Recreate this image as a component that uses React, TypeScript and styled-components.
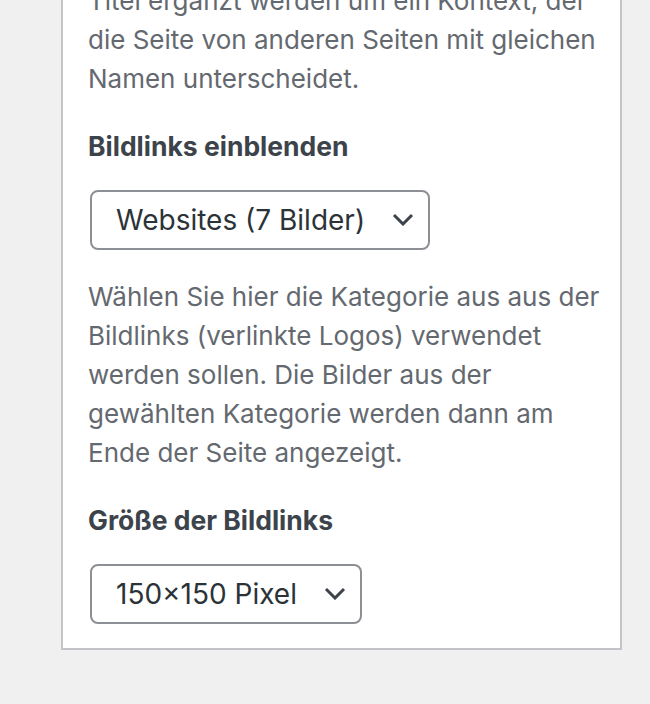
import React from "react";
import styled, { createGlobalStyle } from "styled-components";

const Global = createGlobalStyle`
  html, body { margin: 0; padding: 0; background: #f0f0f1; }
  body { font-family: Inter, "Noto Sans", sans-serif; -webkit-font-smoothing: antialiased; }
  #root { overflow: hidden; height: 704px; }
`;

const Page = styled.div`
  padding-left: 61px;
  width: 561px;
`;

const Panel = styled.section`
  margin-top: -19.5px;
  background: #fff;
  border: 2px solid #c3c4c7;
  border-top: none;
  padding: 0 24px 24px 25px;
`;

const Description = styled.p`
  margin: 0;
  font-size: 26px;
  line-height: 39px;
  color: #646970;
  white-space: nowrap;
`;

const Section = styled.div`
  margin-top: 30px;
  display: flex;
  flex-direction: column;
  align-items: flex-start;
  gap: 26.5px;
`;

const Label = styled.h3`
  margin: 0;
  font-size: 26.5px;
  line-height: 36px;
  font-weight: 700;
  color: #3c434a;
`;

const SelectWrap = styled.div`
  position: relative;
  margin: 0 2px;
  display: inline-flex;
`;

const Select = styled.div`
  box-sizing: border-box;
  height: 60px;
  display: flex;
  align-items: center;
  padding: 0 63px 0 24px;
  border: 2px solid #8c8f94;
  border-radius: 8px;
  background: #fff;
  font-size: 28px;
  color: #2c3338;
  white-space: nowrap;
`;

const Chevron = styled.svg`
  position: absolute;
  right: 16px;
  top: 50%;
  width: 22px;
  height: 13px;
  margin-top: -7px;
`;

function Dropdown({ value }: { value: string }) {
  return (
    <SelectWrap>
      <Select role="combobox">{value}</Select>
      <Chevron viewBox="0 0 22 13" fill="none">
        <path d="M2 2 L11 11 L20 2" stroke="#3c434a" strokeWidth="3" />
      </Chevron>
    </SelectWrap>
  );
}

export default function App() {
  return (
    <>
      <Global />
      <Page>
        <Panel>
          <Description>
            Titel ergänzt werden um ein Kontext, der
            <br />
            die Seite von anderen Seiten mit gleichen
            <br />
            Namen unterscheidet.
          </Description>
          <Section>
            <Label>Bildlinks einblenden</Label>
            <Dropdown value="Websites (7 Bilder)" />
            <Description>
              Wählen Sie hier die Kategorie aus aus der
              <br />
              Bildlinks (verlinkte Logos) verwendet
              <br />
              werden sollen. Die Bilder aus der
              <br />
              gewählten Kategorie werden dann am
              <br />
              Ende der Seite angezeigt.
            </Description>
          </Section>
          <Section>
            <Label>Größe der Bildlinks</Label>
            <Dropdown value="150×150 Pixel" />
          </Section>
        </Panel>
      </Page>
    </>
  );
}
